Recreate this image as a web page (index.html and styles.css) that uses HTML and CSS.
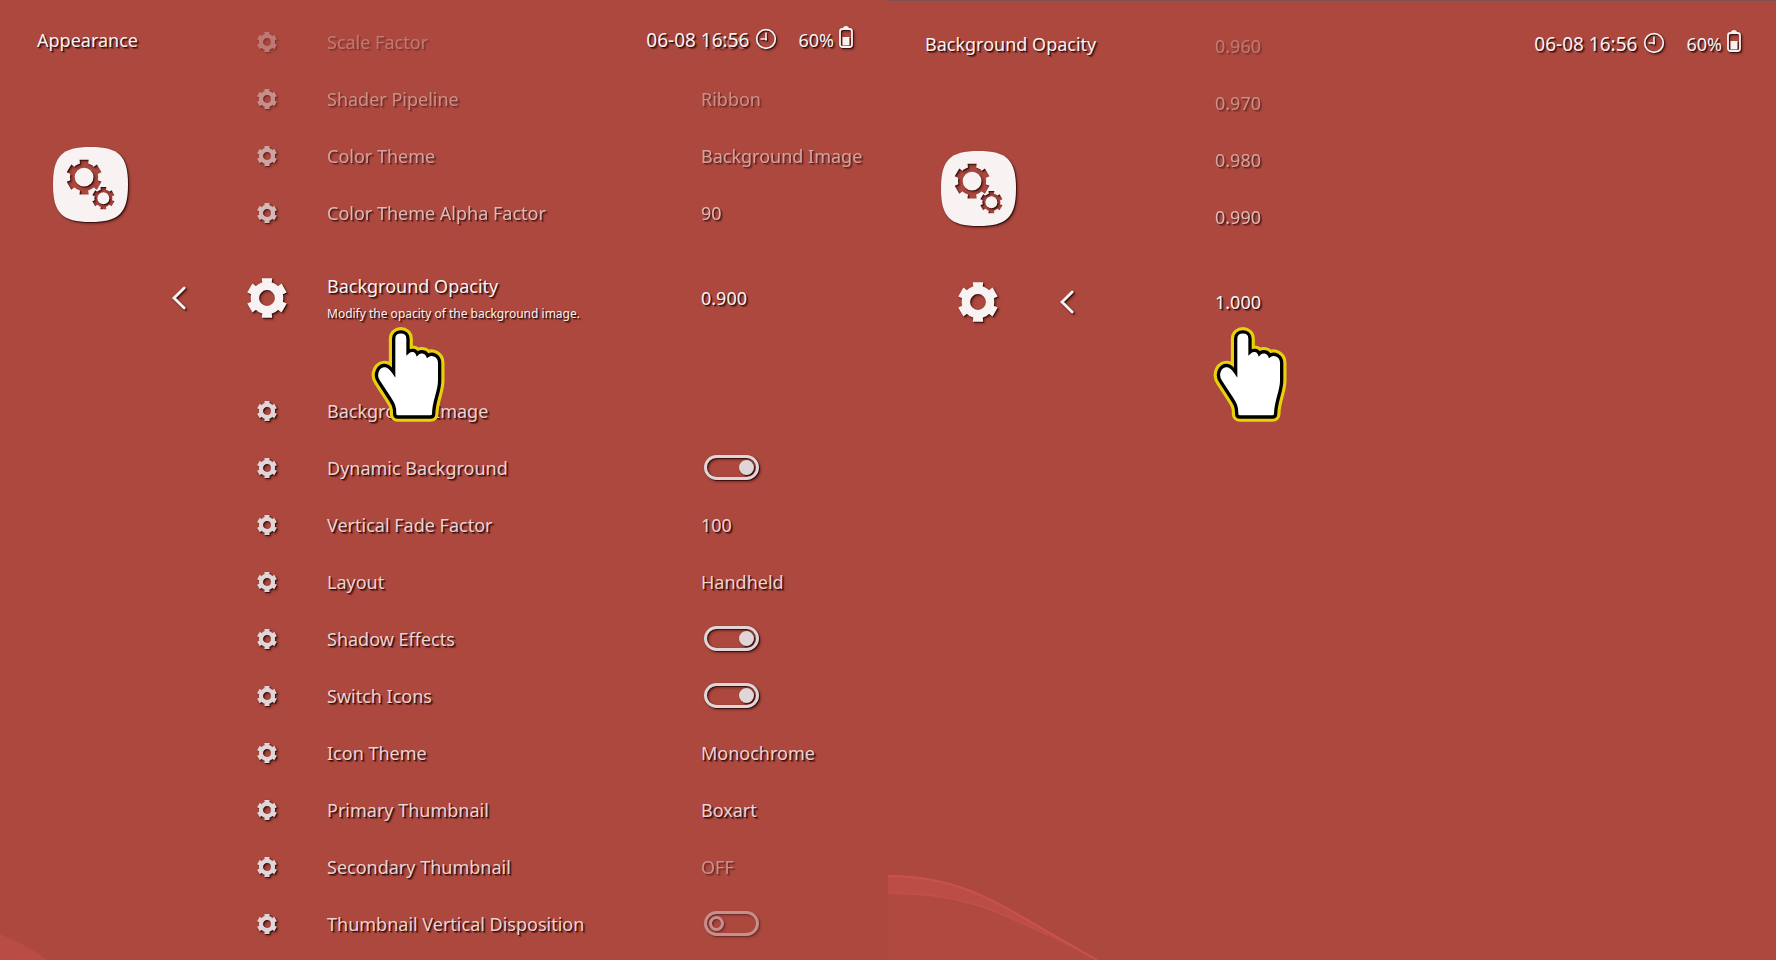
FILE: index.html
```
<!DOCTYPE html>
<html lang="en">
<head>
<meta charset="utf-8">
<title>Appearance</title>
<link rel="stylesheet" href="styles.css">
</head>
<body>
<svg class="defs" aria-hidden="true">
  <defs>
    <path id="tooth" d="M15.6 7 14.8 .2h10.4L24.4 7z"/>
    <g id="teeth">
      <use href="#tooth"/>
      <use href="#tooth" transform="rotate(60 20 20)"/>
      <use href="#tooth" transform="rotate(120 20 20)"/>
      <use href="#tooth" transform="rotate(180 20 20)"/>
      <use href="#tooth" transform="rotate(240 20 20)"/>
      <use href="#tooth" transform="rotate(300 20 20)"/>
    </g>
    <symbol id="gear" viewBox="0 0 40 40">
      <use href="#teeth" fill="currentColor"/>
      <circle cx="20" cy="20" r="12.1" fill="none" stroke="currentColor" stroke-width="8.4"/>
    </symbol>
    <g id="thin-gear">
      <use href="#teeth"/>
      <circle cx="20" cy="20" r="16"/>
      <circle cx="20" cy="20" r="10.700" fill="#fff"/>
    </g>
    <mask id="tile-mask" maskUnits="userSpaceOnUse" x="0" y="0" width="75" height="75">
      <rect width="75" height="75" fill="#fff"/>
      <use href="#thin-gear" transform="translate(13.500 12.500) scale(.88)"/>
      <use href="#thin-gear" transform="translate(39.2 40) scale(.56)"/>
    </mask>
    <symbol id="tile" viewBox="0 0 75 75">
      <path mask="url(#tile-mask)" fill="currentColor" d="M37.500 0C66 0 75 9 75 37.500S66 75 37.500 75 0 66 0 37.500 9 0 37.500 0z"/>
    </symbol>
    <symbol id="chevron" viewBox="0 0 14 24">
      <path d="M12.200 2 2 12l10.200 10" fill="none" stroke="currentColor" stroke-width="2.800" stroke-linecap="round"/>
    </symbol>
    <symbol id="clock" viewBox="0 0 22 26">
      <circle cx="11" cy="11" r="9.300" fill="none" stroke="currentColor" stroke-width="1.700"/>
      <path d="M11 4.500v8M5.500 11H12" fill="none" stroke="currentColor" stroke-width="1.600"/>
    </symbol>
    <symbol id="battery" viewBox="0 0 14 28">
      <path d="M4 2.500Q4 0 7 0t3 2.500z" fill="currentColor"/>
      <rect x="1" y="3" width="12" height="18" rx="2.500" fill="none" stroke="currentColor" stroke-width="1.800"/>
      <path d="M3.500 11h7v8.500h-7z" fill="currentColor"/>
    </symbol>
    <path id="hand-shape" d="M137 188V87C137 60 180 60 180 87V127C190 118 204 122 208 132C218 122 234 126 239 138C252 128 275 138 275 160V213C275 245 257 275 257 312Q257 322 247 322H150Q140 322 140 312C141 288 132 278 122 262L92 216C76 192 92 164 114 168Q126 172 137 188Z"/>
    <symbol id="hand" viewBox="72 52 216 285" overflow="visible">
      <use href="#hand-shape" fill="none" stroke="#e8d00c" stroke-width="29" stroke-linejoin="round"/>
      <use href="#hand-shape" fill="#fff" stroke="#000" stroke-width="10"/>
    </symbol>
  </defs>
</svg>

<main class="stage">
  <section class="pane">
    <svg class="ribbon" viewBox="0 0 888 90" preserveAspectRatio="xMinYMax meet" aria-hidden="true">
      <path d="M0 64Q25 74 48 90H0z" fill="#b94c44"/>
    </svg>
    <header class="bar">
      <h1 class="title">Appearance</h1>
      <div class="status"><time class="time">06-08 16:56</time><svg class="clock"><use href="#clock"/></svg><span>60%</span><svg class="battery"><use href="#battery"/></svg></div>
    </header>
    <nav class="side"><svg class="tile"><use href="#tile"/></svg></nav>
    <ul class="list">
      <li class="row fade-1"><svg class="icon"><use href="#gear"/></svg><span class="label">Scale Factor</span><span class="value">1.000</span></li>
      <li class="row fade-2"><svg class="icon"><use href="#gear"/></svg><span class="label">Shader Pipeline</span><span class="value">Ribbon</span></li>
      <li class="row fade-3"><svg class="icon"><use href="#gear"/></svg><span class="label">Color Theme</span><span class="value">Background Image</span></li>
      <li class="row fade-4"><svg class="icon"><use href="#gear"/></svg><span class="label">Color Theme Alpha Factor</span><span class="value">90</span></li>
      <li class="row selected">
        <button class="back" type="button" aria-label="Back"><svg class="chevron"><use href="#chevron"/></svg></button>
        <svg class="icon"><use href="#gear"/></svg>
        <div class="label described">Background Opacity<p class="hint">Modify the opacity of the background image.</p></div>
        <span class="value">0.900</span>
      </li>
      <li class="row"><svg class="icon"><use href="#gear"/></svg><span class="label">Background Image</span></li>
      <li class="row"><svg class="icon"><use href="#gear"/></svg><label class="label" for="dynamic">Dynamic Background</label><span class="value"><input class="toggle" id="dynamic" type="checkbox" checked></span></li>
      <li class="row"><svg class="icon"><use href="#gear"/></svg><span class="label">Vertical Fade Factor</span><span class="value">100</span></li>
      <li class="row"><svg class="icon"><use href="#gear"/></svg><span class="label">Layout</span><span class="value">Handheld</span></li>
      <li class="row"><svg class="icon"><use href="#gear"/></svg><label class="label" for="shadow">Shadow Effects</label><span class="value"><input class="toggle" id="shadow" type="checkbox" checked></span></li>
      <li class="row"><svg class="icon"><use href="#gear"/></svg><label class="label" for="switch">Switch Icons</label><span class="value"><input class="toggle" id="switch" type="checkbox" checked></span></li>
      <li class="row"><svg class="icon"><use href="#gear"/></svg><span class="label">Icon Theme</span><span class="value">Monochrome</span></li>
      <li class="row"><svg class="icon"><use href="#gear"/></svg><span class="label">Primary Thumbnail</span><span class="value">Boxart</span></li>
      <li class="row"><svg class="icon"><use href="#gear"/></svg><span class="label">Secondary Thumbnail</span><span class="value off">OFF</span></li>
      <li class="row"><svg class="icon"><use href="#gear"/></svg><label class="label" for="vertical">Thumbnail Vertical Disposition</label><span class="value"><input class="toggle" id="vertical" type="checkbox"></span></li>
    </ul>
    <svg class="pointer on-label" aria-hidden="true"><use href="#hand"/></svg>
  </section>

  <section class="pane detail">
    <svg class="ribbon" viewBox="0 0 888 90" preserveAspectRatio="xMinYMax meet" aria-hidden="true">
      <path d="M0 23C70 24 115 48 160 64L209 90H0z" fill="#b04a41"/>
      <path d="M0 5C80 5 125 43 160 62L209 90 160 66C110 42 80 23 0 23z" fill="#bb4d45"/>
      <path d="M0 6C80 6 125 43 160 62L209 90" fill="none" stroke="#c9524c" stroke-width="2"/>
      <path d="M0 23C80 23 115 45 160 65" fill="none" stroke="#c04f48" stroke-width="2"/>
    </svg>
    <header class="bar">
      <h2 class="title">Background Opacity</h2>
      <div class="status"><time class="time">06-08 16:56</time><svg class="clock"><use href="#clock"/></svg><span>60%</span><svg class="battery"><use href="#battery"/></svg></div>
    </header>
    <nav class="side"><svg class="tile"><use href="#tile"/></svg><svg class="crumb"><use href="#gear"/></svg></nav>
    <ul class="list">
      <li class="row fade-1"><span class="label">0.960</span></li>
      <li class="row fade-2"><span class="label">0.970</span></li>
      <li class="row fade-3"><span class="label">0.980</span></li>
      <li class="row fade-4"><span class="label">0.990</span></li>
      <li class="row selected">
        <button class="back" type="button" aria-label="Back"><svg class="chevron"><use href="#chevron"/></svg></button>
        <span class="label">1.000</span>
      </li>
    </ul>
    <svg class="pointer on-value" aria-hidden="true"><use href="#hand"/></svg>
  </section>
</main>
</body>
</html>
```
FILE: styles.css
```
* {
  box-sizing: border-box;
}

body {
  margin: 0;
  background: #ac483e;
  color: #f8f2f2;
  font: 18px/24px "Noto Sans", "Open Sans", sans-serif;
  text-shadow: 1px 1px 0 rgba(30, 0, 0, 0.7), 2px 2px 1px rgba(30, 0, 0, 0.5);
}

svg {
  display: block;
}

.defs {
  position: absolute;
  width: 0;
  height: 0;
}

.stage {
  display: grid;
  grid-template-columns: 1fr 1fr;
  min-height: 100vh;
}

.pane {
  position: relative;
  display: grid;
  grid-template-columns: 160px 1fr;
  align-items: start;
  padding-top: 13px;
}

.detail {
  padding-top: 16px;
  border-top: 1px solid #80504c;
}

.ribbon {
  position: absolute;
  left: 0;
  bottom: 0;
  width: 100%;
}

.bar {
  grid-area: 1 / 1 / 2 / 3;
  z-index: 1;
  display: flex;
  justify-content: space-between;
  padding: 15px 35px 0 37px;
}

.title {
  margin: 0;
  font: inherit;
}

.status {
  display: flex;
}

.time {
  font-size: 19px;
}

.clock,
.battery,
.tile,
.crumb,
.icon,
.chevron,
.toggle {
  filter: drop-shadow(1px 1px 0 rgba(30, 0, 0, 0.6)) drop-shadow(1px 1px 1px rgba(30, 0, 0, 0.5));
}

.clock {
  width: 22px;
  height: 26px;
  margin: 0 21px 0 6px;
}

.clock + span {
  margin-right: 5px;
}

.battery {
  width: 14px;
  height: 28px;
  margin-top: -2px;
}

.side {
  grid-area: 1 / 1;
  padding: 134px 0 0 53px;
}

.tile {
  width: 75px;
  height: 75px;
}

.crumb {
  width: 40px;
  height: 40px;
  margin: 56px 0 0 17px;
}

.list {
  grid-area: 1 / 2;
  margin: 0;
  padding: 0;
  list-style: none;
}

.row {
  display: grid;
  grid-template-columns: 47px 40px minmax(0, 334fr) minmax(0, 187fr);
  column-gap: 40px;
  align-items: center;
  height: 57px;
  color: #ecd3d1;
  white-space: nowrap;
}

.selected {
  height: 141px;
  padding-bottom: 28px;
  color: #f8f2f2;
}

.fade-1 {
  opacity: 0.35;
}

.fade-2 {
  opacity: 0.5;
}

.fade-3 {
  opacity: 0.65;
}

.fade-4 {
  opacity: 0.8;
}

.back {
  grid-column: 1;
  padding: 0 0 0 12px;
  border: 0;
  background: none;
  color: inherit;
}

.chevron {
  width: 14px;
  height: 24px;
}

.icon {
  grid-column: 2;
  justify-self: center;
  width: 20px;
  height: 20px;
  color: #e0d6d7;
}

.selected .icon {
  width: 40px;
  height: 40px;
  color: #f8f2f2;
}

.label {
  grid-column: 3;
}

.described {
  padding-top: 4px;
}

.hint {
  margin: 4px 0 0;
  font-size: 12px;
}

.value {
  grid-column: 4;
}

.off {
  opacity: 0.5;
}

.toggle {
  display: flex;
  align-items: center;
  appearance: none;
  width: 55px;
  height: 25px;
  margin: 0 0 0 3px;
  padding: 0 2px;
  border: 3px solid #e0d6d7;
  border-radius: 13px;
  opacity: 0.5;
}

.toggle::before {
  content: "";
  box-sizing: border-box;
  width: 15px;
  height: 15px;
  border: 3px solid #e0d6d7;
  border-radius: 50%;
}

.toggle:checked {
  justify-content: flex-end;
  opacity: 1;
}

.toggle:checked::before {
  background: #e0d6d7;
}

.pointer {
  position: absolute;
  top: 327px;
  z-index: 2;
  width: 72px;
  height: 95px;
  overflow: visible;
}

.on-label {
  left: 372px;
}

.on-value {
  top: 326px;
  left: 326px;
}
```
